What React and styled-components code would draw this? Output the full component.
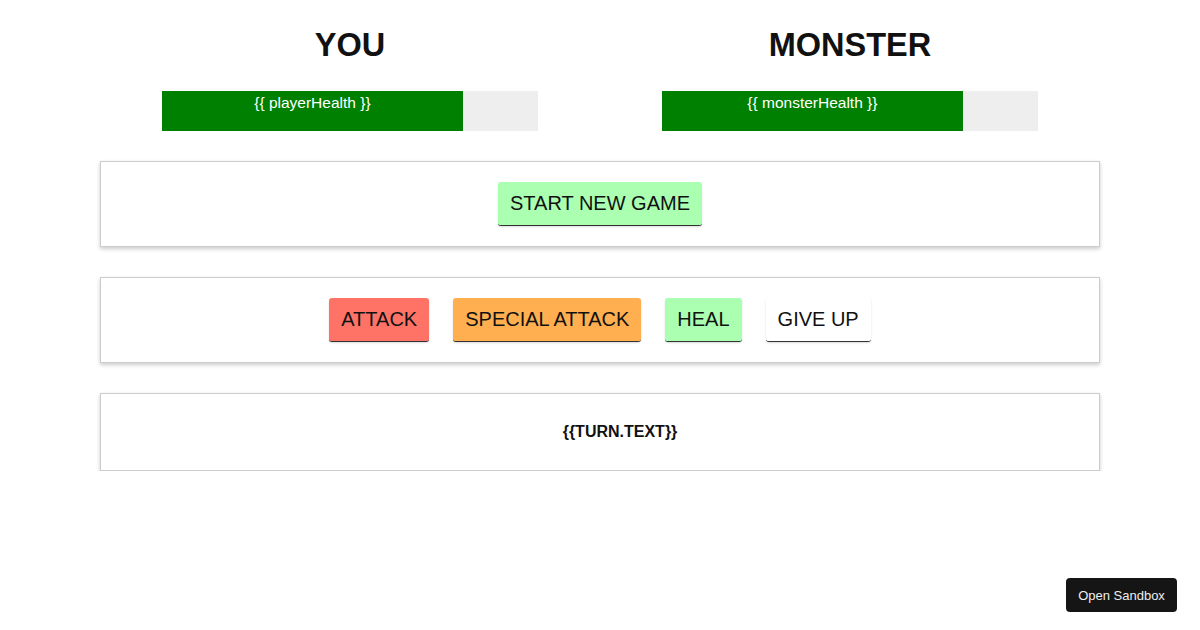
import styled, { createGlobalStyle } from "styled-components";

const GlobalStyle = createGlobalStyle`
  html, body {
    margin: 0;
    padding: 0;
    background: #fff;
    font-family: "Liberation Sans", Arial, sans-serif;
  }
`;

const Page = styled.div`
  width: 1000px;
  margin: 0 auto;
  padding-top: 27px;
`;

const Scores = styled.section`
  display: flex;
`;

const Column = styled.div`
  flex: 1;
  display: flex;
  flex-direction: column;
  align-items: center;
`;

const Title = styled.h1`
  margin: 0 0 27px;
  font-size: 32.5px;
  line-height: 37px;
  font-weight: bold;
  color: #111;
`;

const HealthBar = styled.div`
  width: 376px;
  height: 40px;
  background: #eee;
  display: flex;
`;

const HealthFill = styled.div`
  height: 100%;
  background: green;
  color: #fff;
  font-size: 15.5px;
  line-height: 24px;
  text-align: center;
`;

const Controls = styled.section`
  margin-top: 30px;
  padding: 20px;
  border: 1px solid #ccc;
  box-shadow: 0 2px 4px #ccc;
  display: flex;
  justify-content: center;
  gap: 24px;
`;

const Button = styled.button`
  font-family: "Liberation Sans", Arial, sans-serif;
  font-size: 20px;
  height: 44px;
  padding: 0 12px;
  border: none;
  border-bottom: 1px solid #333;
  border-radius: 3px;
  box-shadow: 0 1px 2px rgba(0, 0, 0, 0.15);
  background: ${(p) => p.$bg || "#fff"};
  color: #111;
  cursor: pointer;
`;

const Log = styled.section`
  margin-top: 30px;
  border: 1px solid #ccc;
  box-shadow: 0 2px 4px #ccc;
`;

const LogList = styled.ul`
  margin: 0;
  padding: 29px 0 29px 40px;
  list-style: none;
  text-align: center;
`;

const LogEntry = styled.li`
  font-size: 16px;
  line-height: 18px;
  font-weight: bold;
  color: #111;
`;

const SandboxButton = styled.button`
  position: fixed;
  right: 23px;
  bottom: 18px;
  width: 111px;
  height: 34px;
  background: #151515;
  color: #eee;
  border: none;
  border-radius: 4px;
  font-family: "Liberation Sans", Arial, sans-serif;
  font-size: 13px;
`;

const players = [
  { name: "YOU", label: "{{ playerHealth }}", health: 80 },
  { name: "MONSTER", label: "{{ monsterHealth }}", health: 80 },
];

export default function App() {
  return (
    <>
      <GlobalStyle />
      <Page>
        <Scores>
          {players.map((p) => (
            <Column key={p.name}>
              <Title>{p.name}</Title>
              <HealthBar>
                <HealthFill style={{ width: `${p.health}%` }}>{p.label}</HealthFill>
              </HealthBar>
            </Column>
          ))}
        </Scores>
        <Controls>
          <Button $bg="#aaffb0">START NEW GAME</Button>
        </Controls>
        <Controls>
          <Button $bg="#ff7367">ATTACK</Button>
          <Button $bg="#ffaf4f">SPECIAL ATTACK</Button>
          <Button $bg="#aaffb0">HEAL</Button>
          <Button>GIVE UP</Button>
        </Controls>
        <Log>
          <LogList>
            <LogEntry>{"{{TURN.TEXT}}"}</LogEntry>
          </LogList>
        </Log>
      </Page>
      <SandboxButton>Open Sandbox</SandboxButton>
    </>
  );
}
